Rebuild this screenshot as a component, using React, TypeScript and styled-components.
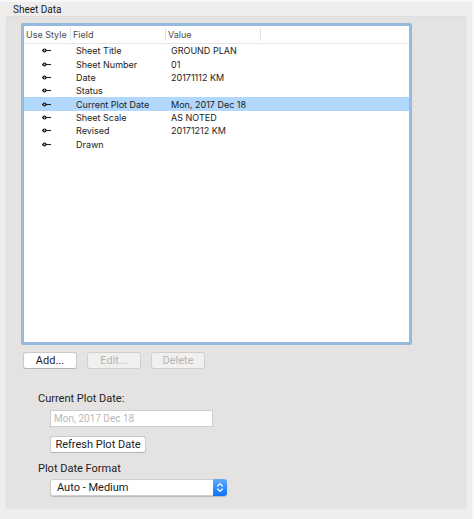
import React, { useState } from "react";
import styled, { createGlobalStyle } from "styled-components";

const GlobalStyle = createGlobalStyle`
  *, *::before, *::after { box-sizing: border-box; }
  body {
    margin: 0;
    background: #f5f4f3;
    color: #1c1c1c;
    font-family: Roboto, "Liberation Sans", sans-serif;
    font-size: 11px;
  }
  button, input, select { font: inherit; color: inherit; margin: 0; }
`;

const Page = styled.main`
  display: flex;
  flex-direction: column;
  min-height: 100vh;
  border: 0 solid #f8f8f7;
  border-width: 2px 2px 0 0;
  background: #eeedec;
  padding: 0 5px 10px 6px;
`;

const Title = styled.h1`
  margin: 0;
  padding: 1px 7px 0;
  font-size: 10px;
  font-weight: 400;
  line-height: 13px;
`;

const Panel = styled.section`
  flex: 1;
  padding: 6px 54px 11px 14px;
  border: 1px solid #dededd;
  border-right-color: #e8e7e6;
  border-bottom-color: #e6e5e4;
  background: #e4e3e2;
`;

const ListBox = styled.div`
  height: 322px;
  border: 3px solid #96badf;
  border-radius: 2px;
  background: #fff;
`;

const Table = styled.table`
  width: 100%;
  border-collapse: separate;
  border-spacing: 0;
  table-layout: fixed;
  font-family: Inter, "Liberation Sans", sans-serif;
  font-size: 9px;
`;

const HeadCell = styled.th<{ $width?: number }>`
  width: ${(p) => (p.$width ? `${p.$width}px` : "auto")};
  height: 18px;
  padding: 0 0 0 2px;
  border-bottom: 1px solid #e6e6e6;
  background: linear-gradient(#e2e2e2, #e2e2e2) right 2px / 1px 13px no-repeat;
  color: #4c4c4c;
  font-weight: 400;
  line-height: 17px;
  text-align: left;
  white-space: nowrap;

  &:last-child { background: none; }
`;

const Row = styled.tr<{ $selected: boolean }>`
  height: 13px;
  background: ${(p) => (p.$selected ? "#b2d7fd" : "transparent")};

  &:nth-child(3n + 2) { height: 14px; }
`;

const Cell = styled.td`
  padding: 0 0 0 5px;
  line-height: 13px;
  white-space: nowrap;
`;

const IconCell = styled(Cell)`
  padding: 0 0 0 17px;

  svg { display: block; }
`;

const Button = styled.button<{ $width: number }>`
  width: ${(p) => p.$width}px;
  height: 17px;
  padding: 0;
  border: 1px solid #cbcac9;
  border-bottom-color: #b4b3b2;
  border-radius: 3px;
  background: #fff;
  line-height: 15px;
  white-space: nowrap;

  &:disabled {
    border-color: #d0cfce;
    background: #f1f0ef;
    color: #b5b4b3;
  }
`;

const ButtonRow = styled.div`
  display: flex;
  gap: 10px;
  padding: 7px 0 0 2px;
`;

const Form = styled.div`
  display: flex;
  flex-direction: column;
  align-items: flex-start;
  padding: 22px 0 0 17px;
`;

const Label = styled.label`
  line-height: 15px;
`;

const Field = styled.div`
  display: flex;
  flex-direction: column;
  align-items: flex-start;
  gap: 9px;
  padding: 4px 0 8px 12px;
`;

const DateInput = styled.input`
  width: 163px;
  height: 17px;
  padding: 0 3px;
  border: 1px solid #cfcecd;
  border-radius: 0;
  background: #fff;
  font-size: 10px;

  &:disabled { color: #b9b9b9; }
`;

const SelectWrap = styled.div`
  display: grid;
  grid-template-columns: 1fr 14px;
  width: 177px;
  height: 17px;
  margin: 3px 0 0 12px;
  border-radius: 3px;
  box-shadow: 0 1px 1px #b9b8b7;
`;

const Select = styled.select`
  grid-area: 1 / 1 / 2 / 3;
  appearance: none;
  width: 100%;
  height: 17px;
  padding: 0 20px 0 6px;
  border: 1px solid #d0cfce;
  border-radius: 3px;
  background: #fff;
`;

const Stepper = styled.span`
  grid-area: 1 / 2;
  display: flex;
  align-items: center;
  justify-content: center;
  z-index: 1;
  border-radius: 0 3px 3px 0;
  background: linear-gradient(#62adf9, #0d73f6);
  pointer-events: none;
`;

const StyleIcon = () => (
  <svg width="11" height="7" viewBox="0 0 11 7" aria-hidden="true">
    <path d="M1 3.5h9" stroke="#222" strokeWidth="1.1" fill="none" />
    <circle cx="3.5" cy="3.5" r="1.5" fill="#aaa" stroke="#111" strokeWidth="1.1" />
  </svg>
);

const fields = [
  ["Sheet Title", "GROUND PLAN"],
  ["Sheet Number", "01"],
  ["Date", "20171112 KM"],
  ["Status", ""],
  ["Current Plot Date", "Mon, 2017 Dec 18"],
  ["Sheet Scale", "AS NOTED"],
  ["Revised", "20171212 KM"],
  ["Drawn", ""],
];

export default function App() {
  const [selected, setSelected] = useState(4);

  return (
    <Page>
      <GlobalStyle />
      <Title id="sheet-data">Sheet Data</Title>
      <Panel aria-labelledby="sheet-data">
        <ListBox>
          <Table>
            <thead>
              <tr>
                <HeadCell $width={47}>Use Style</HeadCell>
                <HeadCell $width={95}>Field</HeadCell>
                <HeadCell $width={95}>Value</HeadCell>
                <HeadCell aria-hidden="true" />
              </tr>
            </thead>
            <tbody>
              {fields.map(([name, value], i) => (
                <Row key={name} $selected={i === selected} onClick={() => setSelected(i)}>
                  <IconCell><StyleIcon /></IconCell>
                  <Cell>{name}</Cell>
                  <Cell>{value}</Cell>
                  <Cell />
                </Row>
              ))}
            </tbody>
          </Table>
        </ListBox>
        <ButtonRow>
          <Button $width={54}>Add...</Button>
          <Button $width={54} disabled>Edit...</Button>
          <Button $width={54} disabled>Delete</Button>
        </ButtonRow>
        <Form>
          <Label htmlFor="plot-date">Current Plot Date:</Label>
          <Field>
            <DateInput id="plot-date" defaultValue="Mon, 2017 Dec 18" disabled />
            <Button $width={96}>Refresh Plot Date</Button>
          </Field>
          <Label htmlFor="plot-format">Plot Date Format</Label>
          <SelectWrap>
            <Select id="plot-format" defaultValue="Auto - Medium">
              <option>Auto - Medium</option>
            </Select>
            <Stepper>
              <svg width="8" height="11" viewBox="0 0 8 11" fill="none" stroke="#fff" strokeWidth="1.2" strokeLinecap="round" strokeLinejoin="round" aria-hidden="true">
                <path d="M1.7 4 4 1.7 6.3 4M1.7 7 4 9.3 6.3 7" />
              </svg>
            </Stepper>
          </SelectWrap>
        </Form>
      </Panel>
    </Page>
  );
}
